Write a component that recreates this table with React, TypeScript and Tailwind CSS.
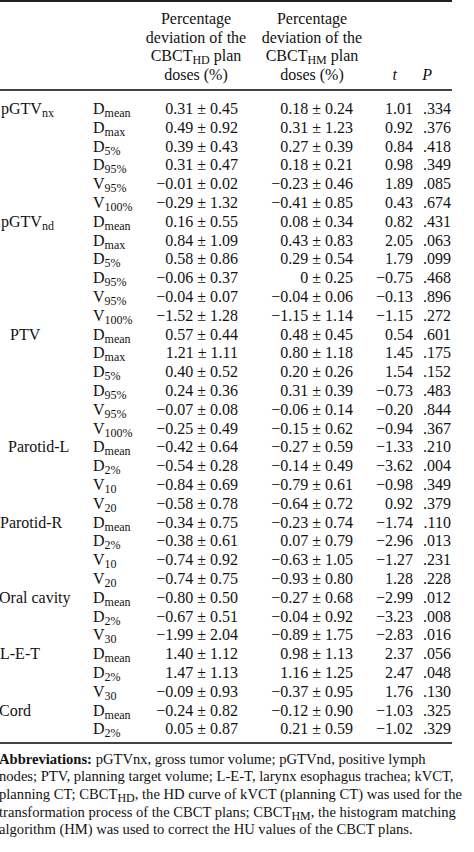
import React from "react";

type Row = {
  group?: string;
  groupSub?: string;
  indent?: string;
  p: string;
  sub: string;
  hd: string;
  hm: string;
  t: string;
  pv: string;
};

const m = "\u2212";

const rows: Row[] = [
  { group: "pGTV", groupSub: "nx", indent: "pl-[1px]", p: "D", sub: "mean", hd: "0.31 ± 0.45", hm: "0.18 ± 0.24", t: "1.01", pv: ".334" },
  { p: "D", sub: "max", hd: "0.49 ± 0.92", hm: "0.31 ± 1.23", t: "0.92", pv: ".376" },
  { p: "D", sub: "5%", hd: "0.39 ± 0.43", hm: "0.27 ± 0.39", t: "0.84", pv: ".418" },
  { p: "D", sub: "95%", hd: "0.31 ± 0.47", hm: "0.18 ± 0.21", t: "0.98", pv: ".349" },
  { p: "V", sub: "95%", hd: `${m}0.01 ± 0.02`, hm: `${m}0.23 ± 0.46`, t: "1.89", pv: ".085" },
  { p: "V", sub: "100%", hd: `${m}0.29 ± 1.32`, hm: `${m}0.41 ± 0.85`, t: "0.43", pv: ".674" },
  { group: "pGTV", groupSub: "nd", indent: "pl-[1px]", p: "D", sub: "mean", hd: "0.16 ± 0.55", hm: "0.08 ± 0.34", t: "0.82", pv: ".431" },
  { p: "D", sub: "max", hd: "0.84 ± 1.09", hm: "0.43 ± 0.83", t: "2.05", pv: ".063" },
  { p: "D", sub: "5%", hd: "0.58 ± 0.86", hm: "0.29 ± 0.54", t: "1.79", pv: ".099" },
  { p: "D", sub: "95%", hd: `${m}0.06 ± 0.37`, hm: "0 ± 0.25", t: `${m}0.75`, pv: ".468" },
  { p: "V", sub: "95%", hd: `${m}0.04 ± 0.07`, hm: `${m}0.04 ± 0.06`, t: `${m}0.13`, pv: ".896" },
  { p: "V", sub: "100%", hd: `${m}1.52 ± 1.28`, hm: `${m}1.15 ± 1.14`, t: `${m}1.15`, pv: ".272" },
  { group: "PTV", indent: "pl-[10px]", p: "D", sub: "mean", hd: "0.57 ± 0.44", hm: "0.48 ± 0.45", t: "0.54", pv: ".601" },
  { p: "D", sub: "max", hd: "1.21 ± 1.11", hm: "0.80 ± 1.18", t: "1.45", pv: ".175" },
  { p: "D", sub: "5%", hd: "0.40 ± 0.52", hm: "0.20 ± 0.26", t: "1.54", pv: ".152" },
  { p: "D", sub: "95%", hd: "0.24 ± 0.36", hm: "0.31 ± 0.39", t: `${m}0.73`, pv: ".483" },
  { p: "V", sub: "95%", hd: `${m}0.07 ± 0.08`, hm: `${m}0.06 ± 0.14`, t: `${m}0.20`, pv: ".844" },
  { p: "V", sub: "100%", hd: `${m}0.25 ± 0.49`, hm: `${m}0.15 ± 0.62`, t: `${m}0.94`, pv: ".367" },
  { group: "Parotid-L", indent: "pl-[8px]", p: "D", sub: "mean", hd: `${m}0.42 ± 0.64`, hm: `${m}0.27 ± 0.59`, t: `${m}1.33`, pv: ".210" },
  { p: "D", sub: "2%", hd: `${m}0.54 ± 0.28`, hm: `${m}0.14 ± 0.49`, t: `${m}3.62`, pv: ".004" },
  { p: "V", sub: "10", hd: `${m}0.84 ± 0.69`, hm: `${m}0.79 ± 0.61`, t: `${m}0.98`, pv: ".349" },
  { p: "V", sub: "20", hd: `${m}0.58 ± 0.78`, hm: `${m}0.64 ± 0.72`, t: "0.92", pv: ".379" },
  { group: "Parotid-R", indent: "pl-0", p: "D", sub: "mean", hd: `${m}0.34 ± 0.75`, hm: `${m}0.23 ± 0.74`, t: `${m}1.74`, pv: ".110" },
  { p: "D", sub: "2%", hd: `${m}0.38 ± 0.61`, hm: "0.07 ± 0.79", t: `${m}2.96`, pv: ".013" },
  { p: "V", sub: "10", hd: `${m}0.74 ± 0.92`, hm: `${m}0.63 ± 1.05`, t: `${m}1.27`, pv: ".231" },
  { p: "V", sub: "20", hd: `${m}0.74 ± 0.75`, hm: `${m}0.93 ± 0.80`, t: "1.28", pv: ".228" },
  { group: "Oral cavity", indent: "-ml-[1px]", p: "D", sub: "mean", hd: `${m}0.80 ± 0.50`, hm: `${m}0.27 ± 0.68`, t: `${m}2.99`, pv: ".012" },
  { p: "D", sub: "2%", hd: `${m}0.67 ± 0.51`, hm: `${m}0.04 ± 0.92`, t: `${m}3.23`, pv: ".008" },
  { p: "V", sub: "30", hd: `${m}1.99 ± 2.04`, hm: `${m}0.89 ± 1.75`, t: `${m}2.83`, pv: ".016" },
  { group: "L-E-T", indent: "pl-0", p: "D", sub: "mean", hd: "1.40 ± 1.12", hm: "0.98 ± 1.13", t: "2.37", pv: ".056" },
  { p: "D", sub: "2%", hd: "1.47 ± 1.13", hm: "1.16 ± 1.25", t: "2.47", pv: ".048" },
  { p: "V", sub: "30", hd: `${m}0.09 ± 0.93`, hm: `${m}0.37 ± 0.95`, t: "1.76", pv: ".130" },
  { group: "Cord", indent: "-ml-[1px]", p: "D", sub: "mean", hd: `${m}0.24 ± 0.82`, hm: `${m}0.12 ± 0.90`, t: `${m}1.03`, pv: ".325" },
  { p: "D", sub: "2%", hd: "0.05 ± 0.87", hm: "0.21 ± 0.59", t: `${m}1.02`, pv: ".329" },
];

function Sub({ children }: { children: React.ReactNode }) {
  return <span className="relative top-[3px] text-[12px] leading-none">{children}</span>;
}

function HeaderCell({ sub }: { sub: string }) {
  return (
    <div className="w-[110px] text-center">
      <div>Percentage</div>
      <div>deviation of the</div>
      <div>
        CBCT<Sub>{sub}</Sub> plan
      </div>
      <div>doses (%)</div>
    </div>
  );
}

export default function App() {
  return (
    <div
      className="min-h-[852px] w-[474px] overflow-hidden bg-white text-[#121212]"
      style={{ fontFamily: '"Liberation Serif", "Times New Roman", serif' }}
    >
      <div className="w-[452px]">
        {/* header */}
        <div className="border-t-[2.5px] border-[#222] pt-[8px] pb-[5px] text-[16px] leading-[18.5px]">
          <div className="flex items-end">
            <div className="w-[141px]" />
            <HeaderCell sub="HD" />
            <div className="w-[6px]" />
            <HeaderCell sub="HM" />
            <div className="w-[30px] text-right italic">t</div>
            <div className="w-[45px] text-right italic pr-[10px]">P</div>
          </div>
        </div>
        <div className="h-[1.5px] bg-[#444]" />

        {/* body */}
        <div className="pt-[9.5px] pb-[3px] text-[16px] leading-[18.8px]">
          {rows.map((r, i) => (
            <div
              key={i}
              className="grid h-[18.8px] grid-cols-[93px_50px_95px_115px_60px_38px] whitespace-nowrap"
            >
              <div className={r.indent}>
                {r.group}
                {r.groupSub && <Sub>{r.groupSub}</Sub>}
              </div>
              <div>
                {r.p}
                <Sub>{r.sub}</Sub>
              </div>
              <div className="text-right">{r.hd}</div>
              <div className="text-right">{r.hm}</div>
              <div className="text-right">{r.t}</div>
              <div className="text-right">{r.pv}</div>
            </div>
          ))}
        </div>
        <div className="h-[1.5px] bg-[#444]" />
      </div>

      {/* footnote */}
      <div className="-ml-[1px] pt-[7px] text-[14.6px] leading-[17.7px] whitespace-nowrap">
        <div>
          <b>Abbreviations:</b> pGTVnx, gross tumor volume; pGTVnd, positive lymph
        </div>
        <div>nodes; PTV, planning target volume; L-E-T, larynx esophagus trachea; kVCT,</div>
        <div>
          planning CT; CBCT<Sub>HD</Sub>, the HD curve of kVCT (planning CT) was used for the
        </div>
        <div>
          transformation process of the CBCT plans; CBCT<Sub>HM</Sub>, the histogram matching
        </div>
        <div>algorithm (HM) was used to correct the HU values of the CBCT plans.</div>
      </div>
    </div>
  );
}
